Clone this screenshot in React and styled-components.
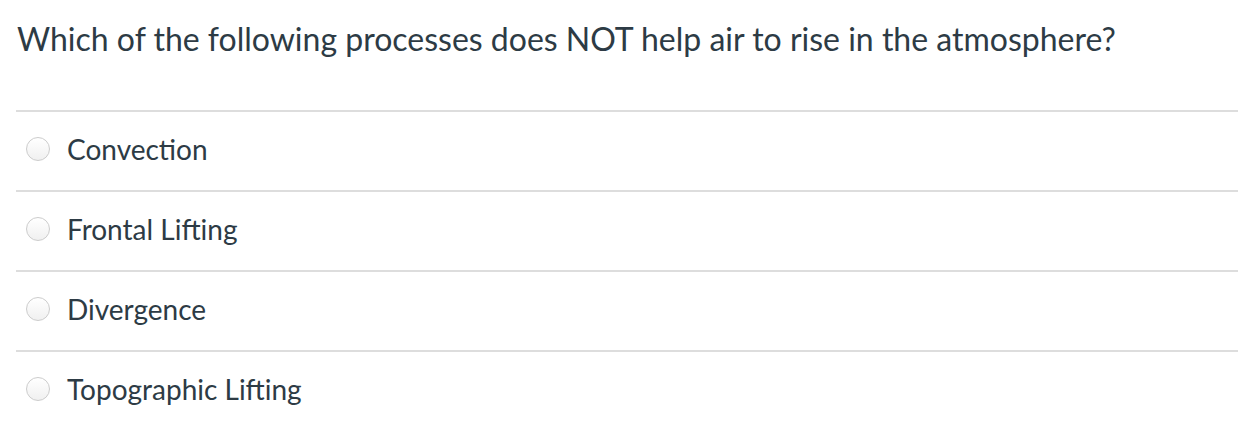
import styled, { createGlobalStyle } from 'styled-components';

const GlobalStyle = createGlobalStyle`
  body {
    margin: 0;
    background: #fff;
    font-family: Lato, "Open Sans", sans-serif;
    color: #2d3b45;
  }
`;

// 문제 영역
const Question = styled.div`
  padding-left: 16px;
`;

const QuestionText = styled.h1`
  margin: 0;
  padding: 17px 0 0 1px;
  height: 110px;
  box-sizing: border-box;
  font-size: 32px;
  font-weight: 400;
  line-height: 44px;
`;

const AnswerList = styled.div`
  display: flex;
  flex-direction: column;
`;

const AnswerRow = styled.label`
  display: flex;
  align-items: center;
  height: 80px;
  box-sizing: border-box;
  border-top: 2px solid #dddddd;
  padding: 0 0 4px 10px;
`;

const Radio = styled.span`
  width: 24px;
  height: 24px;
  border-radius: 50%;
  box-sizing: border-box;
  border: 1px solid #cccccc;
  background: linear-gradient(#ffffff, #f0f0f0);
  flex-shrink: 0;
`;

const AnswerText = styled.span`
  margin-left: 17px;
  font-size: 28px;
  line-height: 34px;
`;

const answers = ['Convection', 'Frontal Lifting', 'Divergence', 'Topographic Lifting'];

export default function App() {
  return (
    <>
      <GlobalStyle />
      <Question>
        <QuestionText>Which of the following processes does NOT help air to rise in the atmosphere?</QuestionText>
        <AnswerList>
          {answers.map((a) => (
            <AnswerRow key={a}>
              <Radio />
              <AnswerText>{a}</AnswerText>
            </AnswerRow>
          ))}
        </AnswerList>
      </Question>
    </>
  );
}
